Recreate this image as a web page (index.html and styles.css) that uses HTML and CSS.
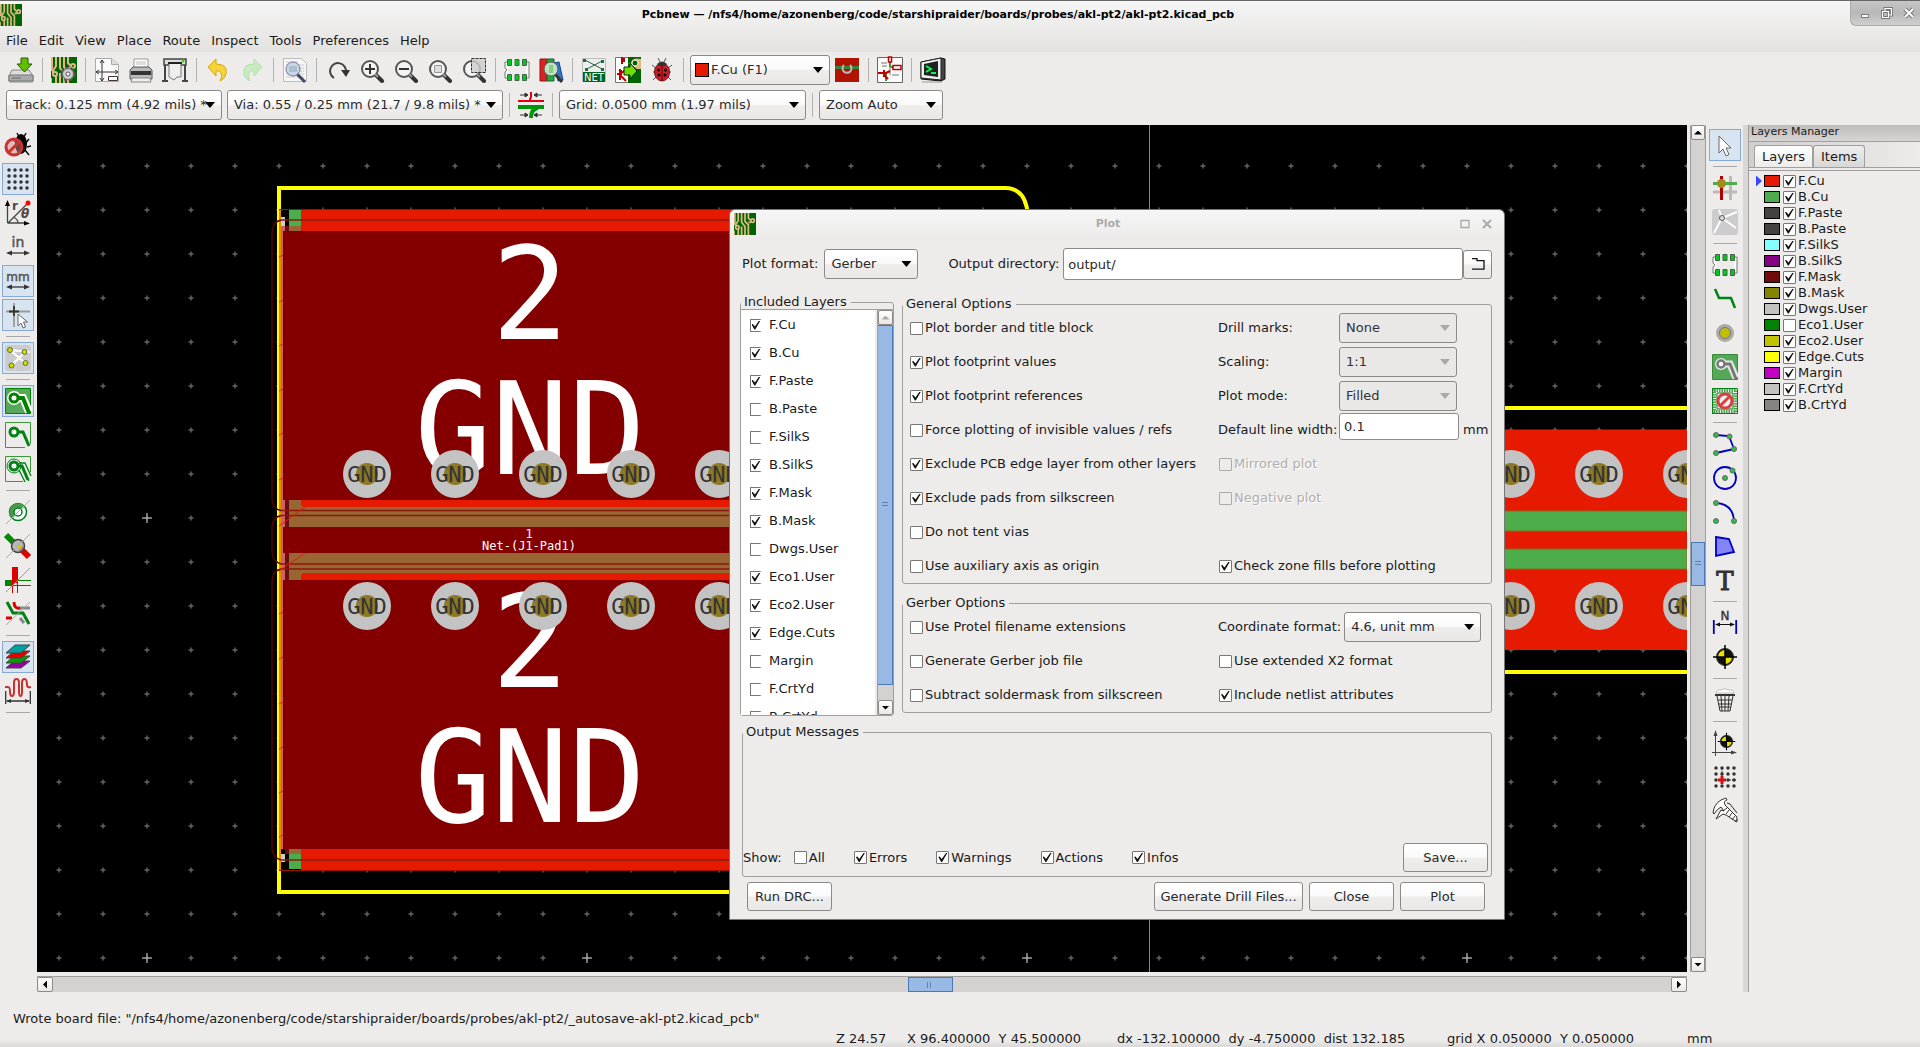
FILE: index.html
```html
<!DOCTYPE html>
<html lang="en">
<head>
<meta charset="utf-8">
<title>Pcbnew</title>
<link rel="stylesheet" href="styles.css">
</head>
<body>
<svg class="defs" aria-hidden="true">
  <defs>
    <symbol id="pcb" viewBox="0 0 26 26">
      <path fill="#006400" d="M0 0h26v26H0z"/>
      <path fill="none" stroke="#deb887" stroke-width="2" d="M1 0v11l-1 3M5 0v9l-3 5v2M9 0v11l4 5v10M13 0v10l4 4v12M17 0v6l3 3M5 19v7M9 16v10M0 21v5M17 11h3"/>
      <circle cx="4" cy="17" r="2" fill="#006400" stroke="#deb887" stroke-width="2"/>
      <circle cx="22" cy="9" r="2" fill="#006400" stroke="#deb887" stroke-width="2"/>
    </symbol>
    <symbol id="lens" viewBox="0 0 26 26">
      <path d="M16 17l7 7" stroke="#333" stroke-width="4" stroke-linecap="round"/>
      <circle cx="11" cy="12" r="8" fill="#f4f4f4" stroke="#555" stroke-width="2"/>
      <path d="M16 17l3 3" stroke="#999" stroke-width="2"/>
    </symbol>
    <symbol id="chip" viewBox="0 0 26 26">
      <path d="M4 5H1v6l2 2-2 2v6h3M22 5h3v16h-3" fill="#fff" stroke="#777" stroke-width="1"/>
      <path fill="#00c81e" stroke="#464" stroke-width="1" d="M3.500 2.500h4v6h-4zM11 2.500h4v6h-4zM18.500 2.500h4v6h-4zM3.500 17.500h4v6h-4zM11 17.500h4v6h-4zM18.500 17.500h4v6h-4z"/>
    </symbol>
    <symbol id="target" viewBox="0 0 26 26">
      <circle cx="13" cy="13" r="8.500" fill="#111" stroke="#333"/>
      <path fill="#e8e000" d="M13 13V6a7 7 0 0 0-7 7zM13 13v7a7 7 0 0 0 7-7z"/>
      <path stroke="#000" stroke-width="1.500" d="M13 1v24M1 13h24"/>
    </symbol>
    <symbol id="via" viewBox="-24 -24 48 48">
      <circle r="24" fill="#c3c3c3"/><circle r="11" fill="#8d7826"/>
      <text class="mono" y="8" font-size="22" text-anchor="middle" fill="#333">GND</text>
    </symbol>
    <pattern id="dots" x="37" y="144" width="44" height="44" patternUnits="userSpaceOnUse">
      <path d="M19.500 22h5M22 19.500v5" stroke="#636363" stroke-width="1.400"/>
    </pattern>
    <pattern id="crosses" x="-73" y="298" width="440" height="440" patternUnits="userSpaceOnUse">
      <path d="M215 220h10M220 215v10" stroke="#9a9a9a" stroke-width="1.500"/>
    </pattern>
  </defs>
</svg>
<div class="app">
  <header class="top">
    <div class="titlebar">
      <svg class="app-icon"><use href="#pcb"/></svg>
      <h1>Pcbnew — /nfs4/home/azonenberg/code/starshipraider/boards/probes/akl-pt2/akl-pt2.kicad_pcb</h1>
      <div class="win-buttons">
        <button aria-label="Minimize"><svg viewBox="0 0 12 12"><path fill="#fff" stroke="#777" d="M2.500 7.500h7v3h-7z"/></svg></button>
        <button aria-label="Restore"><svg viewBox="0 0 12 12"><path fill="none" stroke="#777" stroke-width="3" d="M4 4V1.500h6.500V8H8M1.500 4.500h6v6h-6z"/><path fill="none" stroke="#fff" stroke-width="1.200" d="M4 4V1.500h6.500V8H8M1.500 4.500h6v6h-6z"/></svg></button>
        <button aria-label="Close"><svg viewBox="0 0 12 12"><path stroke="#777" stroke-width="4" d="M2 2l8 8M10 2l-8 8"/><path stroke="#fff" stroke-width="2" d="M2 2l8 8M10 2l-8 8"/></svg></button>
      </div>
    </div>
    <nav class="menubar">
      <button>File</button><button>Edit</button><button>View</button><button>Place</button><button>Route</button><button>Inspect</button><button>Tools</button><button>Preferences</button><button>Help</button>
    </nav>
  </header>

  <div class="toolbar">
    <button class="tool" aria-label="Save"><svg viewBox="0 0 26 26"><path d="M4 13h17l4 6v5q0 1-1 1H2q-1 0-1-1v-5z" fill="#ddd" stroke="#888"/><path d="M1 18h24v6H1z" fill="#aaa" stroke="#777"/><path d="M4 21h9" stroke="#666"/><path d="M13 1h7v6h4l-7.500 8L9 7h4z" fill="#5fc000" stroke="#285a00"/></svg></button>
    <i class="sep"></i>
    <button class="tool" aria-label="Board setup"><svg viewBox="0 0 26 26"><use href="#pcb"/><circle cx="17" cy="17" r="6" fill="#ccc" stroke="#555" stroke-width="3" stroke-dasharray="3 2"/><circle cx="17" cy="17" r="5.500" fill="#ccc" stroke="#666"/><circle cx="17" cy="17" r="2" fill="#fff" stroke="#555"/></svg></button>
    <i class="sep"></i>
    <button class="tool" aria-label="Page settings"><svg viewBox="0 0 26 26"><path d="M1.500 1.500h16l7 6v17h-23z" fill="#fafafa" stroke="#aaa"/><path d="M17.500 1.500v6h7" fill="#ddd" stroke="#aaa"/><path d="M8 3v21M2 15h22M6 6l2-3 2 3M6 21l2 3 2-3M5 13l-3 2 3 2M21 13l3 2-3 2" fill="none" stroke="#333"/><path d="M14.500 19.500h9v4h-9z" fill="#fff" stroke="#433"/></svg></button>
    <button class="tool" aria-label="Print"><svg viewBox="0 0 26 26"><path d="M6 2h14v9H6z" fill="#fff" stroke="#999"/><path d="M8 5h10M8 7h10" stroke="#bbb"/><path d="M2 13l3-3h16l3 3v9H2z" fill="#bbb" stroke="#555"/><path d="M3 14h20v4H3z" fill="#333"/><path d="M4 21h18l1 4H3z" fill="#eee" stroke="#888"/></svg></button>
    <button class="tool" aria-label="Plot"><svg viewBox="0 0 26 26"><path d="M2 2h22v6H2z" fill="#ddd" stroke="#444" stroke-width="1.500"/><path d="M3 8v16M23 8v16M0 24h6M20 24h6" stroke="#444" stroke-width="2"/><path d="M7 6h12v14l-4 0-3 3-5-3z" fill="#eee" stroke="#777"/><path d="M6 6h14" stroke="#222" stroke-width="2"/><circle cx="21" cy="4" r="1.500" fill="#3d0"/></svg></button>
    <i class="sep"></i>
    <button class="tool" aria-label="Undo"><svg viewBox="0 0 26 26"><path d="M3 10l8-8v5q12 0 10 10-1 5-6 7 3-5 1-8-1-3-5-2v5z" fill="#f5d33c" stroke="#d9a800"/></svg></button>
    <button class="tool" aria-label="Redo"><svg viewBox="0 0 26 26"><path d="M23 10l-8-8v5Q3 7 5 17q1 5 6 7-3-5-1-8 1-3 5-2v5z" fill="#c8eac0" stroke="#b2dfaa"/></svg></button>
    <i class="sep"></i>
    <button class="tool" aria-label="Find"><svg viewBox="0 0 26 26"><path d="M1.500 1.500h18l5 5v18h-23z" fill="#f6f6f6" stroke="#bbb"/><path d="M4 5h12M4 8h18M4 11h18M4 14h18M4 17h18M4 20h18" stroke="#ccc"/><path d="M15 17l8 8" stroke="#446" stroke-width="3"/><circle cx="11" cy="12" r="7" fill="#cbd5ea" stroke="#779"/><path d="M7 10h8M7 12h8M7 14h8" stroke="#8aa"/></svg></button>
    <i class="sep"></i>
    <button class="tool" aria-label="Refresh"><svg viewBox="0 0 26 26"><path d="M9 21A8 8 0 1 1 21 15" fill="none" stroke="#444" stroke-width="2"/><path d="M16 13h9l-4 7z" fill="#333"/></svg></button>
    <button class="tool" aria-label="Zoom in"><svg viewBox="0 0 26 26"><use href="#lens"/><path d="M6 12h10M11 7v10" stroke="#333" stroke-width="2"/></svg></button>
    <button class="tool" aria-label="Zoom out"><svg viewBox="0 0 26 26"><use href="#lens"/><path d="M6 12h10" stroke="#333" stroke-width="2"/></svg></button>
    <button class="tool" aria-label="Zoom to fit"><svg viewBox="0 0 26 26"><use href="#lens"/><path d="M7.500 8.500h7v7h-7z" fill="#ddd" stroke="#999"/></svg></button>
    <button class="tool" aria-label="Zoom to selection"><svg viewBox="0 0 26 26"><use href="#lens"/><path d="M10.500 1.500h14v14h-14z" fill="#ccc" fill-opacity=".8" stroke="#333" stroke-dasharray="3 1"/></svg></button>
    <i class="sep"></i>
    <button class="tool" aria-label="Footprint editor"><svg><use href="#chip"/></svg></button>
    <button class="tool" aria-label="Footprint browser"><svg viewBox="0 0 26 26"><path d="M2 2h7v22H2z" fill="#d22" stroke="#911"/><path d="M9 2h7v22H9z" fill="#2a4" stroke="#163"/><path d="M16 6l5-1 4 18-5 1z" fill="#37c" stroke="#148"/><path d="M17 17l7 8" stroke="#333" stroke-width="3"/><circle cx="13" cy="12" r="7" fill="#cfeccf" fill-opacity=".9" stroke="#555"/><path d="M11 8h4v8h-4z" fill="#8c8"/></svg></button>
    <i class="sep"></i>
    <button class="tool" aria-label="Netlist"><svg viewBox="0 0 26 26"><path d="M1.500 1.500h23v23h-23z" fill="#eee" stroke="#bbb"/><path d="M4 3l17 9M21 4L6 12" stroke="#264" fill="none"/><path d="M2 2h3v3H2zM20 3h3v3h-3zM4 11h3v3H4zM20 11h3v3h-3z" fill="#264"/><path d="M2 15h22v10H2z" fill="#00641e"/><text x="13" y="23.500" font-size="10" text-anchor="middle" fill="#fff">NET</text></svg></button>
    <button class="tool" aria-label="Update board from schematic"><svg viewBox="0 0 26 26"><path d="M.5.5h14v25H.5z" fill="#fff" stroke="#777"/><path d="M7 0v7M9 1v4M2 17h4v-4M5 12v11M5 17l7-5M5 18l6 6" stroke="#b00" stroke-width="2" fill="none"/><path d="M13 0h13v26H13z" fill="#006400"/><path d="M13 6h3q1-6 10-4v10h-4z" fill="#deb887"/><circle cx="20" cy="6" r="3" fill="#006400" stroke="#fff"/><path d="M9 10h6V6l7 8-7 8v-4H9z" fill="#6dde00" stroke="#122"/></svg></button>
    <button class="tool" aria-label="Run DRC"><svg viewBox="0 0 26 26"><path d="M3 8l5 4M23 8l-5 4M4 15h18M4 23l5-5M22 23l-5-5M9 1l2 4M17 1l-2 4" stroke="#555"/><ellipse cx="13" cy="15" rx="7.500" ry="9" fill="#c8202a" stroke="#711"/><path d="M8 7q5-5 10 0l-2 2h-6z" fill="#333"/><path d="M13 8v16" stroke="#600"/><circle cx="9.500" cy="13" r="1.500"/><circle cx="16.500" cy="13" r="1.500"/><circle cx="10" cy="18" r="1.500"/><circle cx="16" cy="18" r="1.500"/></svg></button>
    <i class="sep"></i>
    <span class="combo w140"><i class="swatch red"></i><select class="has-swatch" aria-label="Active layer"><option>F.Cu (F1)</option></select></span>
    <button class="tool" aria-label="Layer pair"><svg viewBox="0 0 26 26"><path d="M1 1h24v24H1z" fill="#b01400"/><path d="M1 9h24v3H1z" fill="#38823c"/><path d="M10 8a4.500 4.500 0 1 0 6 0" fill="none" stroke="#bbb" stroke-width="2"/></svg></button>
    <i class="sep"></i>
    <button class="tool" aria-label="Open schematic"><svg viewBox="0 0 26 26"><path d="M.5.500h25v25H.5z" fill="#fafafa" stroke="#666"/><path d="M4 6h6M5 9h5M15 18h7M13 6v12M18 10h-5" stroke="#777"/><path d="M13 5v5M14 10h2M9 15v9" stroke="#393" stroke-width="2"/><path d="M11.500 0h3v5h-3zM16 8.500h8v4h-8z" fill="#fff" stroke="#b00" stroke-width="1.500"/><path d="M1 16h6M7 13v7M7 17l6-3M7 18l4 4" stroke="#b00" stroke-width="2"/></svg></button>
    <i class="sep"></i>
    <button class="tool" aria-label="Scripting console"><svg viewBox="0 0 26 26"><path d="M1 5l20-4 4 1v20l-4 2-20-2z" fill="#444" stroke="#111"/><path d="M1 5l20-4v22L1 21z" fill="#eee" stroke="#222"/><path d="M4 7l14-3v16L4 18z" fill="#222"/><path d="M6 9l5 3-5 3M11 16h5" fill="none" stroke="#0f5" stroke-width="2"/><path d="M2 25h20" stroke="#999"/></svg></button>
  </div>

  <div class="toolbar second">
    <span class="combo w216"><select aria-label="Track width"><option>Track: 0.125 mm (4.92 mils) *</option></select></span>
    <span class="combo w276"><select aria-label="Via size"><option>Via: 0.55 / 0.25 mm (21.7 / 9.8 mils) *</option></select></span>
    <i class="sep"></i>
    <button class="tool" aria-label="Automatic track width"><svg viewBox="0 0 26 26"><path d="M0 9h26M13 9q-2 0 0-4V0" stroke="#e0000f" stroke-width="2" fill="none"/><path d="M0 15h26" stroke="#00960a" stroke-width="4"/><path d="M20 16q-7 1-7 10" fill="none" stroke="#00960a" stroke-width="4"/><path d="M2 3h8l-3-2v4l3-2M24 3h-8l3-2v4l-3-2M2 23h8l-3-2v4l3-2M24 23h-8l3-2v4l-3-2" stroke="#333" fill="#333"/></svg></button>
    <i class="sep"></i>
    <span class="combo w248"><select aria-label="Grid"><option>Grid: 0.0500 mm (1.97 mils)</option></select></span>
    <i class="sep"></i>
    <span class="combo w124"><select aria-label="Zoom"><option>Zoom Auto</option></select></span>
  </div>

  <main class="work">
    <div class="side left">
      <button class="tool" aria-label="DRC off"><svg viewBox="0 0 26 26"><path d="M8 8l4 3M24 7l-4 5M12 1l2 4M21 1l-2 4M22 15l4-1M20 18l4 5" stroke="#111" stroke-width="1.500"/><ellipse cx="16" cy="12" rx="6" ry="10"/><circle cx="9" cy="15" r="8" fill="#d88" fill-opacity=".5" stroke="#c73434" stroke-width="3"/><path d="M4 20L15 9" stroke="#c73434" stroke-width="3"/></svg></button>
      <button class="tool on" aria-label="Show grid"><svg viewBox="0 0 26 26"><path d="M4 4h19M4 10h19M4 16h19M4 22h19" stroke="#333" stroke-width="3.500" stroke-linecap="round" stroke-dasharray="0 6"/></svg></button>
      <button class="tool" aria-label="Polar coordinates"><svg viewBox="0 0 26 26"><path d="M2.500 23V5M2.500 23h18M3 23L23 3M8 17q5 2 5 6" stroke="#444" stroke-width="1.300" fill="none"/><path d="M0 6l2.500-6L5 6zM19 21l6 2.500-6 2z"/><circle cx="23" cy="3" r="2.500" fill="red"/><text x="7" y="10" font-size="12" font-weight="bold" fill="#544">r</text><text x="16" y="18" font-size="12" font-weight="bold" font-style="italic" fill="#544">θ</text></svg></button>
      <button class="tool" aria-label="Inches"><svg viewBox="0 0 26 26"><text x="13" y="13" font-size="14" text-anchor="middle" fill="#555" stroke="#555" stroke-width=".5">in</text><path d="M4 19h18" stroke="#333" stroke-width="1.300"/><path d="M1 19l6-2.500v5zM25 19l-6-2.500v5z" fill="#333"/></svg></button>
      <button class="tool on" aria-label="Millimetres"><svg viewBox="0 0 26 26"><text x="13" y="13" font-size="12" text-anchor="middle" fill="#555" stroke="#555" stroke-width=".5">mm</text><path d="M4 19h18" stroke="#333" stroke-width="1.300"/><path d="M1 19l6-2.500v5zM25 19l-6-2.500v5z" fill="#333"/></svg></button>
      <button class="tool on" aria-label="Full-window crosshair"><svg viewBox="0 0 26 26"><path d="M1 9.500h24M9 1v24" stroke="#999" stroke-width="1.800"/><path d="M4 9.500h10M9 4v10" stroke="#333" stroke-width="1.800"/><path d="M13 12v12l3-3 2 5 2.500-1-2-5h4z" fill="#fff" stroke="#666"/></svg></button>
      <i class="sep"></i>
      <button class="tool on" aria-label="Show ratsnest"><svg viewBox="0 0 26 26"><rect width="26" height="26" rx="3" fill="#ccc"/><path d="M5 5l20 2M20 7L7 20M5 5l15 13" stroke="#fff" stroke-width="2"/><g fill="#cbe000" stroke="#664"><circle cx="5" cy="5" r="2.500"/><circle cx="19.500" cy="7" r="2.500"/><circle cx="6.500" cy="20.500" r="2.500"/><circle cx="20.500" cy="18" r="2.500"/></g></svg></button>
      <i class="sep"></i>
      <button class="tool on" aria-label="Filled zones"><svg viewBox="0 0 26 26"><path d="M.5.5h25v25H.5z" fill="#55a85a" stroke="#008200"/><path d="M9 10h9l6 14" stroke="#fff" stroke-width="8" fill="none"/><circle cx="9" cy="10" r="7" fill="#fff"/><path d="M9 10h9l6 15" stroke="#008200" stroke-width="4" fill="none"/><circle cx="9" cy="10" r="4" fill="#fff" stroke="#008200" stroke-width="3"/></svg></button>
      <button class="tool" aria-label="Hide zones"><svg viewBox="0 0 26 26"><path d="M25.500 22V.5H.5v25H20" fill="none" stroke="#3a9a3a"/><path d="M12 10h6l6 14" stroke="#008214" stroke-width="3" fill="none"/><circle cx="9" cy="10" r="4" fill="#fff" stroke="#008214" stroke-width="3"/></svg></button>
      <button class="tool" aria-label="Zone outlines"><svg viewBox="0 0 26 26"><path d="M25.500 16V.5H.5v25H18" fill="none" stroke="#3a9a3a"/><circle cx="9" cy="10" r="7" fill="none" stroke="#008214"/><path d="M14 7h6l6 13M14 14l6 12M12 10h5l7 15" stroke="#008214" stroke-width="1.300" fill="none"/><path d="M12 10h5l6 14" stroke="#008214" stroke-width="3" fill="none"/><circle cx="9" cy="10" r="4" fill="#fff" stroke="#008214" stroke-width="3"/></svg></button>
      <i class="sep"></i>
      <button class="tool" aria-label="Via outlines"><svg viewBox="0 0 26 26"><circle cx="13" cy="13" r="8.500" fill="#fff" stroke="#00821e" stroke-width="1.500"/><path d="M7 20A9 9 0 0 1 20 7z" fill="#4a9a4a"/><circle cx="13" cy="13" r="4" fill="#fff" stroke="#00821e" stroke-width="1.500"/><path d="M1 25L25 1" stroke="#aaa"/></svg></button>
      <button class="tool" aria-label="Pad outlines"><svg viewBox="0 0 26 26"><path d="M1 2l8 8" stroke="#008c00" stroke-width="6"/><path d="M15 15l9 9" stroke="#dc0000" stroke-width="6"/><circle cx="13" cy="13" r="6.500" fill="#aaa" fill-opacity=".8" stroke="#444" stroke-width="1.500"/><path d="M13 13h4l-3 4z" fill="#dc0"/><path d="M1 25L25 1" stroke="#aaa"/></svg></button>
      <button class="tool" aria-label="Track outlines"><svg viewBox="0 0 26 26"><path d="M0 16h9" stroke="#008200" stroke-width="6"/><path d="M9 13.500h17M9 18.500h17" stroke="#008200"/><path d="M10 0v16" stroke="#dc0000" stroke-width="6"/><path d="M7.500 16v10M12.500 16v10" stroke="#dc0000"/><path d="M1 25L25 1" stroke="#999"/></svg></button>
      <button class="tool" aria-label="High contrast"><svg viewBox="0 0 26 26"><path d="M25 7H14M15 17l4 5" stroke="#888" stroke-width="3" fill="none"/><path d="M2 1l6 11h10l6 11" stroke="#008214" stroke-width="3" fill="none"/><path d="M9 1q0 7 6 6M1 17h6" stroke="#dc0000" stroke-width="3" fill="none"/><path d="M1 24L25 1" stroke="#aaa"/></svg></button>
      <i class="sep"></i>
      <button class="tool on" aria-label="Layers manager"><svg viewBox="0 0 26 26" stroke="#444" stroke-width="1"><path d="M1 24l8-7h16l-9 7z" fill="#9600a0"/><path d="M1 19l8-7h16l-9 7z" fill="#00a000"/><path d="M1 14l8-7h16l-9 7z" fill="#e60000"/><path d="M1 9l9-8h15l-9 8z" fill="#00a0a0"/></svg></button>
      <button class="tool" aria-label="Microwave tools"><svg viewBox="0 0 26 26"><path d="M0 9h3q2 0 2 5 0 4 2 4t2-4V5q0-4 2.500-4T14 5v9q0 4 1.500 4t1.500-4V5q0-4 2.500-4T22 7q0 3 4 2" fill="none" stroke="#c83232" stroke-width="2"/><path d="M.7 13v13M25.300 13v13M2 23h22" stroke="#333" stroke-width="1.300"/><path d="M1 23l5-2v4zM25 23l-5-2v4z" fill="#333"/></svg></button>
      <i class="sep"></i>
    </div>

    <div class="viewport">
      <div class="canvas">
        <svg viewBox="37 125 1650 847" preserveAspectRatio="xMidYMid slice">
          <path d="M37 125h1650v847H37z"/>
          <path d="M37 125h1650v847H37z" fill="url(#dots)"/>
          <path d="M37 125h1650v847H37z" fill="url(#crosses)"/>
          <path d="M1149.500 125v847" stroke="#888"/>
          <path d="M1028 215q-2-18-10-23-5-4-12-4H279v704h800M1450 408h300M1450 672h300" fill="none" stroke="#ff0" stroke-width="4"/>
          <path d="M1450 429.500h237v220.500h-237z" fill="#e51a00"/>
          <path d="M1450 511h237v20h-237zM1450 549h237v20h-237z" fill="#4dad4a" stroke="#8a6a1a"/>
          <path d="M301 210h700v21H301zM301 849h700v21H301z" fill="#e51a00"/>
          <path d="M289 210h12v16h-12zM289 854h12v15h-12z" fill="#4dad4a"/>
          <path d="M289 226h12v5h-12zM289 849h12v5h-12zM289 500h700v27H289zM289 553h700v27H289z" fill="#996633"/>
          <path d="M301 500h700v7H303l-2-2zM303 573h698v7H301v-5z" fill="#e51a00"/>
          <path d="M281 217h4v9h-4zM281 854h4v8h-4z" fill="#ccc"/>
          <path d="M281 226h4v623h-4z" fill="#cd6464"/>
          <path d="M279 210h2v660h-2z" fill="#f08000"/>
          <path d="M285 226h4v5h-4zM285 849h4v5h-4zM285 500h4v27h-4zM285 553h4v27h-4z" fill="#6b0d10"/>
          <path d="M283 231h700v269H283zM283 527h700v26H283zM283 580h700v269H283z" fill="#840000"/>
          <path d="M281 220h700M281 510.500h700M281 515.500h700M281 564h700M281 569h700M281 860h700" stroke="#8b1a0c" stroke-width="1.500"/>
          <path d="M281 220q-9 2-9 12v268q1 9 9 10.500M281 515.500q-9 2-9 12v25q1 9 9 11.500M281 569q-9 2-9 12v268q1 9 9 11" fill="none" stroke="#5a0000" stroke-width="1.500"/>
          <path d="M279 209.500h722M279 870.500h722" stroke="#a01000"/>
          <path d="M279 257l4-2M279 302l4-2M279 346l4-2M279 391l4-2M279 435l4-2M279 480l4-2M279 526l26-19M279 571l26-18M279 614l4-2M279 659l4-2M279 704l4-2M279 749l4-2M279 793l4-2M279 837l4-2" stroke="#e51a00"/>
          <g class="mono" fill="#fff" text-anchor="middle">
            <g font-size="128"><text x="530" y="339">2</text><text x="530" y="474">GND</text><text x="530" y="687">2</text><text x="530" y="822">GND</text></g>
            <g font-size="12"><text x="529" y="538">1</text><text x="529" y="550">Net-(J1-Pad1)</text></g>
          </g>
          <use href="#via" x="343" y="450" width="48" height="48"/><use href="#via" x="431" y="450" width="48" height="48"/><use href="#via" x="519" y="450" width="48" height="48"/><use href="#via" x="607" y="450" width="48" height="48"/><use href="#via" x="695" y="450" width="48" height="48"/>
          <use href="#via" x="1487" y="450" width="48" height="48"/><use href="#via" x="1575" y="450" width="48" height="48"/><use href="#via" x="1663" y="450" width="48" height="48"/>
          <use href="#via" x="343" y="582" width="48" height="48"/><use href="#via" x="431" y="582" width="48" height="48"/><use href="#via" x="519" y="582" width="48" height="48"/><use href="#via" x="607" y="582" width="48" height="48"/><use href="#via" x="695" y="582" width="48" height="48"/>
          <use href="#via" x="1487" y="582" width="48" height="48"/><use href="#via" x="1575" y="582" width="48" height="48"/><use href="#via" x="1663" y="582" width="48" height="48"/>
        </svg>
      </div>
      <div class="vscroll">
        <button class="arrow up" aria-label="Scroll up"></button>
        <i class="grow-a"></i><i class="thumb"></i><i class="grow-b"></i>
        <button class="arrow down" aria-label="Scroll down"></button>
      </div>
      <div class="hscroll">
        <button class="arrow lt" aria-label="Scroll left"></button>
        <i class="grow-c"></i><i class="thumb"></i><i class="grow-d"></i>
        <button class="arrow rt" aria-label="Scroll right"></button>
      </div>
    </div>

    <div class="side right">
      <button class="tool on" aria-label="Select"><svg viewBox="0 0 26 26"><path d="M7 4v17l4-4 3 7 3-1.500-3-6.500h5z" fill="#fff" stroke="#666"/></svg></button>
      <i class="sep"></i>
      <button class="tool" aria-label="Highlight net"><svg viewBox="0 0 26 26"><path d="M18.500 1v24M1 17h24" stroke="#bbb" stroke-width="3"/><path d="M1 8.500h24" stroke="#50aa50" stroke-width="3"/><path d="M9.500 1v24" stroke="#b40000" stroke-width="3"/><circle cx="9.500" cy="8.500" r="4.500" fill="#a08c1e"/></svg></button>
      <button class="tool" aria-label="Local ratsnest"><svg viewBox="0 0 26 26"><rect width="26" height="26" rx="3" fill="#ccc"/><path d="M7 1l3 8L2 24M10 9l15-6M10 9l14 10" stroke="#fff" stroke-width="2" fill="none"/><circle cx="10" cy="9" r="2.500" fill="#ddd" stroke="#555"/></svg></button>
      <i class="sep"></i>
      <button class="tool" aria-label="Add footprint"><svg><use href="#chip"/></svg></button>
      <button class="tool" aria-label="Route track"><svg viewBox="0 0 26 26"><path d="M3 3l4 9h12l4 10" fill="none" stroke="#008214" stroke-width="2.500"/></svg></button>
      <button class="tool" aria-label="Add via"><svg viewBox="0 0 26 26"><circle cx="13" cy="13" r="7" fill="#c3be00" stroke="#aaa" stroke-width="4"/><circle cx="13" cy="13" r="5.500" fill="none" stroke="#777"/></svg></button>
      <button class="tool" aria-label="Add zone"><svg viewBox="0 0 26 26"><path d="M.5.5h25v25H.5z" fill="#55a85a" stroke="#3a8a3a"/><path d="M9 10h9l6 14" stroke="#e8e8e8" stroke-width="7" fill="none"/><circle cx="9" cy="10" r="6" fill="#e8e8e8"/><path d="M9 10h9l6 15" stroke="#777" stroke-width="3" fill="none"/><circle cx="9" cy="10" r="3.500" fill="#fff" stroke="#777" stroke-width="2.500"/></svg></button>
      <button class="tool" aria-label="Add keepout"><svg viewBox="0 0 26 26"><path d="M2 2h22v22H2z" fill="#eee" stroke="#50a050" stroke-width="4" stroke-dasharray="1.500 1"/><path d="M.5.500h25v25H.5zM5 5h16v16H5z" fill="none" stroke="#008214"/><circle cx="13" cy="13" r="7" fill="#eee" stroke="#d84040" stroke-width="3"/><path d="M8 18L18 8" stroke="#d84040" stroke-width="3"/></svg></button>
      <i class="sep"></i>
      <button class="tool" aria-label="Draw line"><svg viewBox="0 0 26 26"><path d="M4 4l13 1 5 13-18 4" fill="none" stroke="#0000c0" stroke-width="1.800"/><g fill="#2dbe46" stroke="#666"><circle cx="4" cy="4" r="2.500"/><circle cx="17.500" cy="5.500" r="2.500"/><circle cx="22" cy="18" r="2.500"/><circle cx="4" cy="22" r="2.500"/></g></svg></button>
      <button class="tool" aria-label="Draw circle"><svg viewBox="0 0 26 26"><circle cx="13" cy="13" r="11" fill="none" stroke="#0000c0" stroke-width="1.800"/><g fill="#2dbe46" stroke="#666"><circle cx="13" cy="13" r="2.500"/><circle cx="20.500" cy="5.500" r="2.500"/></g></svg></button>
      <button class="tool" aria-label="Draw arc"><svg viewBox="0 0 26 26"><path d="M4 4q17 1 18 18" fill="none" stroke="#0000c0" stroke-width="1.800"/><g fill="#2dbe46" stroke="#666"><circle cx="4" cy="4" r="2.500"/><circle cx="4" cy="22" r="2.500"/><circle cx="22" cy="22" r="2.500"/></g></svg></button>
      <button class="tool" aria-label="Draw polygon"><svg viewBox="0 0 26 26"><path d="M4 4l13 2 5 13-18 4z" fill="#8484f5" stroke="#0000c0" stroke-width="1.800"/></svg></button>
      <button class="tool" aria-label="Add text"><svg viewBox="0 0 26 26"><text class="serif" x="13" y="23" font-size="26" text-anchor="middle" fill="#333" stroke="#333" stroke-width="1">T</text></svg></button>
      <i class="sep"></i>
      <button class="tool" aria-label="Add dimension"><svg viewBox="0 0 26 26"><path d="M1.800 10v14M24.200 10v14" stroke="#0000c0" stroke-width="1.800"/><path d="M4 14.500h18" stroke="#111"/><path d="M3 14.500l5-2v4zM23 14.500l-5-2v4z" fill="#111"/><text x="13" y="10" font-size="12" text-anchor="middle" fill="#333" stroke="#333" stroke-width=".4">N</text></svg></button>
      <button class="tool" aria-label="Add target"><svg><use href="#target"/></svg></button>
      <i class="sep"></i>
      <button class="tool" aria-label="Delete"><svg viewBox="0 0 26 26"><path d="M4 6q1-4 5-3 4-3 7 0 5-1 6 3z" fill="#fff" stroke="#bbb"/><path d="M3 8h20" stroke="#333" stroke-width="2"/><path d="M5 9l3 15h10l3-15M9 9l1 15M13 9v15M17 9l-1 15M6 13h14M6 17h14M7 20h12" fill="none" stroke="#333"/></svg></button>
      <i class="sep"></i>
      <button class="tool" aria-label="Drill origin"><svg viewBox="0 0 26 26"><path d="M3.500 2v24M0 22.500h22" stroke="#444"/><path d="M1.500 6l2-6 2 6zM19 20.500l6 2-6 2z" fill="#444"/><use href="#target" x="5" y="2" width="19" height="19"/></svg></button>
      <button class="tool" aria-label="Grid origin"><svg viewBox="0 0 26 26"><path d="M4 4h19M4 10h19M4 16h19M4 22h19" stroke="#333" stroke-width="3.500" stroke-linecap="round" stroke-dasharray="0 6"/><path d="M10 4v9M17 16h7" stroke="#333" stroke-dasharray="2 1"/><path d="M6 16h8M10 12v8" stroke="#d21414" stroke-width="3"/></svg></button>
      <button class="tool" aria-label="Measure"><svg viewBox="0 0 26 26"><path d="M1 15Q2 6 9 2l5-2 1 2q-4 1-2 5l12 12v5l-11-7-3-1-7 5 5-9 3 1-3-4q-4 2-7 7z" fill="#fff" stroke="#333"/><path d="M15 5l3 1 7 9M11 13l4-3M14 16l3-4M17 19l3-4M20 22l3-4M23 24l2-3" fill="none" stroke="#333"/></svg></button>
    </div>

    <aside class="panel">
      <h2>Layers Manager</h2>
      <div class="tabs" role="tablist"><button role="tab" aria-selected="true">Layers</button><button role="tab" aria-selected="false">Items</button></div>
      <ul class="layers">
        <li class="current"><i class="swatch red"></i><label><input type="checkbox" checked>F.Cu</label></li>
        <li><i class="swatch bcu"></i><label><input type="checkbox" checked>B.Cu</label></li>
        <li><i class="swatch paste"></i><label><input type="checkbox" checked>F.Paste</label></li>
        <li><i class="swatch paste"></i><label><input type="checkbox" checked>B.Paste</label></li>
        <li><i class="swatch fsilk"></i><label><input type="checkbox" checked>F.SilkS</label></li>
        <li><i class="swatch bsilk"></i><label><input type="checkbox" checked>B.SilkS</label></li>
        <li><i class="swatch fmask"></i><label><input type="checkbox" checked>F.Mask</label></li>
        <li><i class="swatch bmask"></i><label><input type="checkbox" checked>B.Mask</label></li>
        <li><i class="swatch light"></i><label><input type="checkbox" checked>Dwgs.User</label></li>
        <li><i class="swatch eco1"></i><label><input type="checkbox">Eco1.User</label></li>
        <li><i class="swatch eco2"></i><label><input type="checkbox" checked>Eco2.User</label></li>
        <li><i class="swatch edge"></i><label><input type="checkbox" checked>Edge.Cuts</label></li>
        <li><i class="swatch margin"></i><label><input type="checkbox" checked>Margin</label></li>
        <li><i class="swatch light"></i><label><input type="checkbox" checked>F.CrtYd</label></li>
        <li><i class="swatch bcrt"></i><label><input type="checkbox" checked>B.CrtYd</label></li>
      </ul>
    </aside>
  </main>

  <footer class="status">
    <p>Wrote board file: "/nfs4/home/azonenberg/code/starshipraider/boards/probes/akl-pt2/_autosave-akl-pt2.kicad_pcb"</p>
    <div class="fields"><span>Z 24.57</span><span>X 96.400000  Y 45.500000</span><span>dx -132.100000  dy -4.750000  dist 132.185</span><span>grid X 0.050000  Y 0.050000</span><span>mm</span></div>
  </footer>
</div>

<section class="dialog" role="dialog" aria-labelledby="dlg-title">
  <header class="dlg-title">
    <svg class="app-icon"><use href="#pcb"/></svg>
    <h2 id="dlg-title">Plot</h2>
    <button aria-label="Maximize"><svg viewBox="0 0 10 10"><path d="M1 1.500h8v7H1z" fill="none" stroke="#aaa" stroke-width="1.300"/></svg></button>
    <button aria-label="Close dialog"><svg viewBox="0 0 10 10"><path d="M1 1l8 8M9 1L1 9" stroke="#aaa" stroke-width="2"/></svg></button>
  </header>
  <div class="dlg-head">
    <label for="fmt">Plot format:</label>
    <span class="combo w94"><select id="fmt"><option>Gerber</option></select></span>
    <label class="dir-label" for="dir">Output directory:</label>
    <input class="text dir" id="dir" type="text" value="output/">
    <button class="btn browse" aria-label="Browse"><svg viewBox="0 0 14 12"><path d="M1 .7h5v2h7v8.500H1" fill="none" stroke="#111" stroke-width="1.300"/></svg></button>
  </div>
  <div class="dlg-main">
    <fieldset class="included">
      <legend>Included Layers</legend>
      <div class="listbox">
        <div class="items">
          <label><input type="checkbox" checked>F.Cu</label>
          <label><input type="checkbox" checked>B.Cu</label>
          <label><input type="checkbox" checked>F.Paste</label>
          <label><input type="checkbox">B.Paste</label>
          <label><input type="checkbox">F.SilkS</label>
          <label><input type="checkbox" checked>B.SilkS</label>
          <label><input type="checkbox" checked>F.Mask</label>
          <label><input type="checkbox" checked>B.Mask</label>
          <label><input type="checkbox">Dwgs.User</label>
          <label><input type="checkbox" checked>Eco1.User</label>
          <label><input type="checkbox" checked>Eco2.User</label>
          <label><input type="checkbox" checked>Edge.Cuts</label>
          <label><input type="checkbox">Margin</label>
          <label><input type="checkbox">F.CrtYd</label>
          <label><input type="checkbox">B.CrtYd</label>
        </div>
        <div class="vscroll small">
          <button class="arrow up" aria-label="List up" disabled></button>
          <i class="thumb"></i><i class="rest"></i>
          <button class="arrow down" aria-label="List down"></button>
        </div>
      </div>
    </fieldset>
    <div class="options">
      <fieldset class="general">
        <legend>General Options</legend>
        <div class="row"><label><input type="checkbox">Plot border and title block</label><label for="drill">Drill marks:</label><span class="combo"><select id="drill" disabled><option>None</option></select></span></div>
        <div class="row"><label><input type="checkbox" checked>Plot footprint values</label><label for="scale">Scaling:</label><span class="combo"><select id="scale" disabled><option>1:1</option></select></span></div>
        <div class="row"><label><input type="checkbox" checked>Plot footprint references</label><label for="mode">Plot mode:</label><span class="combo"><select id="mode" disabled><option>Filled</option></select></span></div>
        <div class="row"><label><input type="checkbox">Force plotting of invisible values / refs</label><label for="lw">Default line width:</label><input class="text narrow" id="lw" type="text" value="0.1"><span class="unit">mm</span></div>
        <div class="row two"><label><input type="checkbox" checked>Exclude PCB edge layer from other layers</label><label class="off"><input type="checkbox" disabled>Mirrored plot</label></div>
        <div class="row two"><label><input type="checkbox" checked>Exclude pads from silkscreen</label><label class="off"><input type="checkbox" disabled>Negative plot</label></div>
        <div class="row two"><label><input type="checkbox">Do not tent vias</label></div>
        <div class="row two"><label><input type="checkbox">Use auxiliary axis as origin</label><label><input type="checkbox" checked>Check zone fills before plotting</label></div>
      </fieldset>
      <fieldset class="gerber">
        <legend>Gerber Options</legend>
        <div class="row two"><label><input type="checkbox">Use Protel filename extensions</label><div class="coord"><label for="coord">Coordinate format:</label><span class="combo"><select id="coord"><option>4.6, unit mm</option></select></span></div></div>
        <div class="row two"><label><input type="checkbox">Generate Gerber job file</label><label><input type="checkbox">Use extended X2 format</label></div>
        <div class="row two"><label><input type="checkbox">Subtract soldermask from silkscreen</label><label><input type="checkbox" checked>Include netlist attributes</label></div>
      </fieldset>
    </div>
  </div>
  <fieldset class="messages">
    <legend>Output Messages</legend>
    <div class="log"></div>
    <div class="show">
      <span>Show:</span>
      <label><input type="checkbox">All</label>
      <label><input type="checkbox" checked>Errors</label>
      <label><input type="checkbox" checked>Warnings</label>
      <label><input type="checkbox" checked>Actions</label>
      <label><input type="checkbox" checked>Infos</label>
      <button class="btn">Save...</button>
    </div>
  </fieldset>
  <div class="dlg-foot">
    <button class="btn">Run DRC...</button>
    <button class="btn wide">Generate Drill Files...</button>
    <button class="btn">Close</button>
    <button class="btn">Plot</button>
  </div>
</section>
</body>
</html>
```
FILE: styles.css
```css
* { box-sizing: border-box; }
body { margin: 0; background: #edeceb; color: #1a1a1a; font: 13px/16px "DejaVu Sans", sans-serif; }
button, select, input { font: inherit; color: inherit; margin: 0; }
button { padding: 0; border: 0; background: none; }
h1, h2, p, ul { margin: 0; padding: 0; font-size: 13px; }
svg { display: block; }
svg text { font-family: "DejaVu Sans", sans-serif; }
svg .mono, svg .mono text { font-family: "DejaVu Sans Mono", monospace; }
svg .serif { font-family: "DejaVu Serif", serif; }
.defs { position: absolute; width: 0; height: 0; }
.app { display: flex; flex-direction: column; min-height: 100vh; }

/* title and menu */
.top { height: 52px; border-top: 1px solid #666; background: linear-gradient(#f6f6f6, #e3e2e0); }
.titlebar { display: flex; align-items: flex-start; height: 28px; }
.titlebar .app-icon { margin-top: 3px; }
.app-icon { width: 22px; height: 22px; }
.titlebar h1 { flex: 1; padding: 6px 0 0 4px; text-align: center; font-weight: bold; font-size: 11px; color: #000; }
.win-buttons { display: flex; justify-content: space-around; align-items: center; width: 70px; height: 25px; padding-left: 3px; border: 1px solid #aaa; border-width: 0 0 1px 1px; border-bottom-left-radius: 6px; background: linear-gradient(#c6c6c6, #b8b8b8 50%, #cfcfcf); }
.win-buttons svg { width: 12px; height: 12px; }
.menubar { display: flex; gap: 11px; padding: 4px 6px; }

/* toolbars */
.toolbar { display: flex; align-items: center; height: 36px; padding-left: 4px; }
.toolbar.second { height: 37px; padding: 0 0 3px 6px; }
.tool { display: grid; place-items: center; flex: none; width: 32px; height: 32px; margin: 1px; border: 1px solid transparent; }
.tool svg { width: 26px; height: 26px; overflow: visible; }
.tool.on { background: #d9e4f1; border-color: #86a9d6; }
.toolbar .sep { width: 1px; height: 24px; margin: 0 4px; background: #b4b2b0; }
.side { display: flex; flex-direction: column; align-items: center; flex: none; width: 37px; padding-top: 3px; }
.side .sep { flex: none; width: 24px; height: 1px; margin: 4px 0; background: #aaa8a6; }
.side.left { align-items: flex-start; padding-left: 1px; }
.side.left .sep { margin-left: 5px; }

/* combo boxes */
.combo { position: relative; display: inline-flex; align-items: center; height: 30px; }
.combo select { appearance: none; width: 100%; height: 30px; padding: 0 14px 0 6px; border: 1px solid #8c8a88; border-radius: 3px; background: linear-gradient(#fff, #fafafa 48%, #eeedec 52%, #e9e8e6); color: #2a2a2a; }
.combo select.has-swatch { padding-left: 20px; }
.combo .swatch { position: absolute; left: 5px; width: 14px; height: 14px; }
.combo::after { content: ""; position: absolute; right: 7px; top: 12px; width: 10px; height: 6px; background: #000; clip-path: polygon(0 0, 100% 0, 50% 100%); pointer-events: none; }
.combo:has(select:disabled)::after { background: #aaa8a5; }
.combo select:disabled { background: #e9e8e6; opacity: 1; color: #333; }
.toolbar .combo { margin-right: 5px; }
.w94 { width: 94px; } .w124 { width: 124px; } .w140 { width: 140px; margin-left: 2px; } .toolbar .w140 { margin-right: 0; }
.w216 { width: 216px; } .w248 { width: 247px; margin-left: 2px; } .w276 { width: 276px; }
.toolbar .w248 { margin-right: 2px; } .toolbar .w276 { margin-right: 2px; }
.toolbar .w124 { margin-left: 2px; }

/* work area */
.work { display: flex; flex: 1; min-height: 0; }
.viewport { display: grid; flex: 1; min-width: 0; grid-template: 1fr 16px / 1fr 16px; gap: 4px 3px; padding-bottom: 0; }
.canvas { position: relative; overflow: hidden; background: #000; }
.canvas > svg { position: absolute; width: 100%; height: 100%; }
.vscroll { display: flex; flex-direction: column; background: #d4d2d0; border: 1px solid #a19f9d; border-width: 0 1px; }
.hscroll { display: flex; background: #d4d2d0; border-top: 1px solid #a19f9d; grid-column: 1; }
.thumb { display: grid; place-items: center; border: 1px solid #4a78b8; background: #97b9e4; }
.thumb::after { content: ""; width: 6px; height: 6px; background: repeating-linear-gradient(#5d83b5 0 1px, transparent 1px 3px); }
.hscroll .thumb::after { background: repeating-linear-gradient(90deg, #5d83b5 0 1px, transparent 1px 3px); }
.vscroll .thumb { height: 44px; flex: none; } .hscroll .thumb { width: 45px; flex: none; }
.grow-a { flex: 403; } .grow-b { flex: 371; } .grow-c { flex: 854; } .grow-d { flex: 718; }
.arrow { display: grid; place-items: center; flex: none; border: 1px solid #8c8a88; border-radius: 2px; background: linear-gradient(#fff, #e9e8e6); }
.vscroll .arrow { height: 15px; } .hscroll .arrow { width: 16px; }
.arrow::after { content: ""; width: 8px; height: 4px; background: #000; }
.up::after { clip-path: polygon(0 100%, 100% 100%, 50% 0); }
.down::after { clip-path: polygon(0 0, 100% 0, 50% 100%); }
.lt::after, .rt::after { width: 4px; height: 8px; }
.lt::after { clip-path: polygon(100% 0, 100% 100%, 0 50%); }
.rt::after { clip-path: polygon(0 0, 0 100%, 100% 50%); }
.arrow:disabled::after { background: #aaa; }

/* layers panel */
.panel { flex: none; width: 177px; border-left: 5px solid #d8d7d5; box-shadow: inset 1px 0 #a19f9d; padding-left: 1px; }
.panel h2 { height: 17px; padding: 1px 0 0 2px; font-weight: normal; font-size: 11px; line-height: 12px; background: linear-gradient(#bebdbc, #d6d5d4); border-bottom: 1px solid #a19f9d; }
.tabs { display: flex; align-items: flex-end; height: 26px; padding-left: 5px; background: linear-gradient(90deg, #d0cfce, #edeceb); border-bottom: 1px solid #a19f9d; }
.tabs button { height: 22px; padding: 0 7px; border: 1px solid #a19f9d; border-bottom: 0; border-radius: 3px 3px 0 0; background: linear-gradient(#eee, #d8d7d6); }
.tabs [aria-selected="true"] { background: linear-gradient(#fff, #edeceb); }
.layers { list-style: none; margin-top: 2px; padding-top: 2px; border-top: 1px solid #a19f9d; }
.layers li { display: flex; align-items: center; gap: 3px; height: 16px; padding-left: 15px; position: relative; }
.layers .current::before { content: ""; position: absolute; left: 7px; width: 6px; height: 11px; background: #3c46ff; clip-path: polygon(0 0, 100% 50%, 0 100%); }
.swatch { width: 16px; height: 12px; border: 1px solid #000; }
.red { background: #e51a00; } .bcu { background: #4dad4a; } .paste { background: #424242; } .fsilk { background: #84ffff; }
.bsilk { background: #840084; } .fmask { background: #720a0a; } .bmask { background: #848400; } .light { background: #c2c2c2; }
.eco1 { background: #008400; } .eco2 { background: #c2c200; } .edge { background: #ff0; } .margin { background: #c200c2; } .bcrt { background: #848484; }

/* tick boxes */
label { display: inline-flex; align-items: center; white-space: nowrap; }
input[type="checkbox"] { appearance: none; display: grid; place-items: center; flex: none; width: 13px; height: 13px; margin-right: 2px; border: 1px solid #777; border-radius: 1px; background: #fff; }
input[type="checkbox"]:checked::after { content: ""; width: 9px; height: 9px; background: #111; clip-path: polygon(0 45%, 15% 38%, 38% 66%, 85% 0, 100% 0, 42% 100%, 32% 100%); }
input[type="checkbox"]:disabled { background: #edeceb; border-color: #aaa; }
.off { color: #b0aeac; text-shadow: 1px 1px #fff; }

/* status bar */
.status { height: 55px; padding-top: 19px; background: linear-gradient(#edeceb 48px, #dad9d8); }
.status p { padding-left: 13px; font-size: 13px; height: 20px; }
.fields { display: grid; grid-template-columns: 836fr 71fr 210fr 330fr 240fr 233fr; white-space: pre; }
.fields span:first-child { grid-column: 2; }

/* plot dialog */
.dialog { position: absolute; left: 729px; top: 209px; width: 776px; border: 1px solid #777; border-radius: 6px 6px 0 0; background: linear-gradient(#f6f6f6, #edeceb 26px); padding: 0 12px 8px 10px; }
.dlg-title { display: flex; align-items: center; height: 28px; margin: 0 -6px; }
.dlg-title h2 { flex: 1; text-align: center; color: #aaa; font-size: 11px; padding-left: 6px; }
.dlg-title button { width: 22px; display: grid; place-items: center; }
.dlg-title svg { width: 10px; height: 10px; }
.dlg-title .app-icon { width: 22px; height: 22px; }
.dlg-head { display: flex; align-items: center; height: 32px; margin-top: 10px; padding-left: 2px; }
.dlg-head .combo { margin-left: 6px; }
.dir-label { margin: 0 4px 0 30px; }
.text { border: 1px solid #8c8a88; border-radius: 3px; background: #fff; padding: 0 4px; color: #2a2a2a; }
.dir { flex: 1; min-width: 0; height: 32px; }
.btn { height: 29px; width: 85px; border: 1px solid #8c8a88; border-radius: 3px; background: linear-gradient(#fff, #fafafa 48%, #eeedec 52%, #e9e8e6); color: #2a2a2a; }
.browse { width: 29px; display: grid; place-items: center; }
.browse svg { width: 14px; height: 12px; }
fieldset { margin: 0; padding: 0; border: 1px solid #a19f9d; border-radius: 3px; min-width: 0; }
legend { padding: 0 4px 0 3px; line-height: 14px; }
.dlg-main { display: flex; align-items: flex-start; gap: 8px; margin-top: 15px; }
.included { width: 154px; }
.listbox { display: flex; height: 406px; border-top: 1px solid #a19f9d; overflow: hidden; }
.items { flex: 1; display: flex; flex-direction: column; background: #fff; padding: 1px 0 0 9px; }
.items label { flex: none; height: 28px; }
.items input[type="checkbox"] { border-right: 0; width: 11px; margin-right: 8px; }
.vscroll.small { width: 16px; margin-left: 2px; border-right: 0; }
.vscroll.small .thumb { flex: 1; height: auto; border-left: 0; }
.rest { height: 15px; }
.options { flex: 1; display: grid; gap: 12px; margin-top: 2px; }
.row { display: grid; grid-template-columns: 308px 121px 120px auto; align-items: center; height: 34px; padding-left: 7px; }
.row.two { grid-template-columns: 308px 1fr; }
.row.two > label + label { padding-left: 1px; }
.row .combo { width: 118px; }
.narrow { width: 120px; height: 27px; align-self: start; }
.unit { padding-left: 4px; }
.coord { display: flex; align-items: center; }
.coord label { margin-right: 3px; }
.row .coord .combo { width: 137px; }
.messages { display: flex; flex-direction: column; margin: 9px 0 0 2px; }
.log { height: 104px; }
.show { display: flex; align-items: center; gap: 29px; padding: 0 3px 4px 0; }
.show span { margin-right: -17px; }
.show .btn { margin-left: auto; }
.dlg-foot { display: flex; gap: 6px; margin-top: 5px; padding: 0 7px; }
.dlg-foot .btn:first-child { margin-right: auto; }
.dlg-foot .wide { width: 149px; }
```
